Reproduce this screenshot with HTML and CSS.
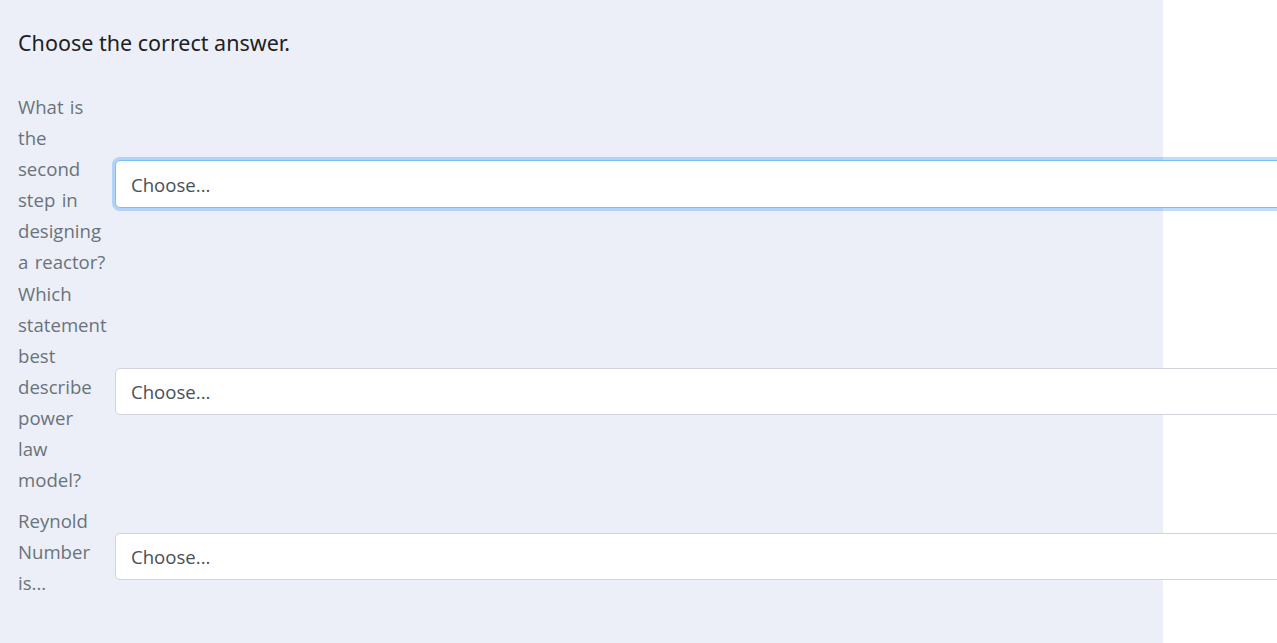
FILE: index.html
```html
<!DOCTYPE html>
<html>
<head>
<meta charset="utf-8">
<link rel="stylesheet" href="styles.css">
</head>
<body>
<div class="page">
  <main class="panel">
    <h1 class="title">Choose the correct answer.</h1>
    <div class="rows">
      <div class="row row-1">
        <label class="label">What is the second step in designing a reactor?</label>
        <select class="choice focused"><option>Choose...</option></select>
      </div>
      <div class="row row-2">
        <label class="label">Which statement best describe power law model?</label>
        <select class="choice shifted"><option>Choose...</option></select>
      </div>
      <div class="row row-3">
        <label class="label">Reynold Number is...</label>
        <select class="choice shifted"><option>Choose...</option></select>
      </div>
    </div>
  </main>
</div>
</body>
</html>
```

FILE: styles.css
```css
html, body {
  margin: 0;
  padding: 0;
  background: #ffffff;
  height: 100%;
  overflow: hidden;
}
.page {
  display: flex;
  height: 643px;
}
.panel {
  width: 1163px;
  flex: none;
  background: #eceff7;
  padding: 0 0 0 18px;
  box-sizing: border-box;
}
.title {
  margin: 28px 0 0 0;
  font-family: "Noto Sans", sans-serif;
  font-weight: 400;
  font-size: 21.5px;
  line-height: 30px;
  color: #1d2125;
}
.rows {
  margin-top: 33px;
  display: flex;
  flex-direction: column;
}
.row {
  display: flex;
  align-items: center;
}
.row-2 { margin-top: 1px; }
.row-3 { margin-top: 10px; }
.label {
  width: 89.5px;
  flex: none;
  font-family: "Open Sans", sans-serif;
  font-size: 18.6px;
  line-height: 31px;
  word-spacing: 1.5px;
  color: #6a737b;
}
.choice {
  flex: none;
  margin-left: 7.5px;
  width: 1250px;
  height: 47.5px;
  box-sizing: border-box;
  appearance: none;
  -webkit-appearance: none;
  background: #ffffff;
  border: 1px solid #ced4da;
  border-radius: 5px;
  padding: 0 15px;
  font-family: "Open Sans", sans-serif;
  font-size: 18.6px;
  color: #495057;
  outline: none;
}
.focused {
  border-color: #80bdff;
  box-shadow: 0 0 0 3px rgba(0, 123, 255, 0.25);
}
.shifted { margin-top: 10px; }
```
